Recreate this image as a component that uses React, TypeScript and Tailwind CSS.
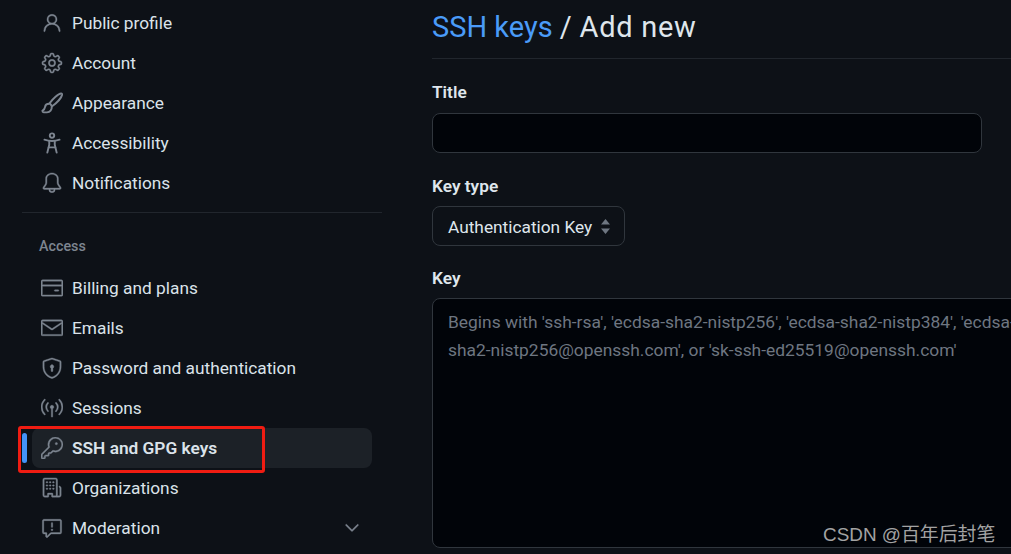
import React from 'react';
import {
  GoPerson, GoGear, GoBell, GoCreditCard, GoMail,
  GoShieldLock, GoBroadcast, GoKey, GoOrganization, GoReport, GoChevronDown,
} from 'react-icons/go';

const BrushIcon: React.FC<{ className?: string }> = ({ className }) => (
  <svg viewBox="0 0 16 16" className={className} fill="none">
    <g stroke="currentColor" strokeWidth="1.4" strokeLinejoin="round" strokeLinecap="round">
      <path d="M6.3 8.1C8.6 5 12.6 1.2 14.6 1.1c.7 0 .8.6.7 1.1-.5 2.1-4.2 6-7.2 8.2z" />
      <path d="M5.9 8.6c-1.7 0-2.8 1-3 2.4-.1 1-.7 1.9-1.9 2.7 0 .6.3 1 1 1.1h2.3c2.3-.1 3.7-1.7 3.5-4.1" />
    </g>
  </svg>
);

const AccessibilityIcon: React.FC<{ className?: string }> = ({ className }) => (
  <svg viewBox="0 0 16 16" className={className} fill="none">
    <g stroke="currentColor" strokeWidth="1.4" strokeLinecap="round" strokeLinejoin="round">
      <circle cx="8" cy="2.6" r="1.6" />
      <path d="M2.5 5.6c3.6 1.2 7.4 1.2 11 0" />
      <path d="M6 6.6v2.6L4.6 15" />
      <path d="M10 6.6v2.6L11.4 15" />
      <path d="M5.6 11.2h4.8" />
    </g>
  </svg>
);

const topNav = [
  { label: 'Public profile', icon: GoPerson },
  { label: 'Account', icon: GoGear },
  { label: 'Appearance', icon: BrushIcon },
  { label: 'Accessibility', icon: AccessibilityIcon },
  { label: 'Notifications', icon: GoBell },
];

const accessNav = [
  { label: 'Billing and plans', icon: GoCreditCard },
  { label: 'Emails', icon: GoMail },
  { label: 'Password and authentication', icon: GoShieldLock },
  { label: 'Sessions', icon: GoBroadcast },
  { label: 'SSH and GPG keys', icon: GoKey, active: true },
  { label: 'Organizations', icon: GoOrganization },
  { label: 'Moderation', icon: GoReport, chevron: true },
];

type Item = { label: string; icon: React.ComponentType<{ className?: string }>; active?: boolean; chevron?: boolean };

const NavItem: React.FC<{ item: Item }> = ({ item }) => {
  const Icon = item.icon;
  return (
    <div className={`relative flex h-10 w-[340px] items-center rounded-lg px-[9px] ${item.active ? 'bg-[#1c2127] font-semibold' : ''}`}>
      {item.active && <span className="absolute left-[-10px] top-[5px] h-[30px] w-[5px] rounded-full bg-[#4493f8]" />}
      <Icon className="h-[22px] w-[22px] shrink-0 stroke-[0.4] text-[#7d8590]" />
      <span className="ml-[9px] text-[#dbe3ea]">{item.label}</span>
      {item.chevron && <GoChevronDown className="ml-auto h-[22px] w-[22px] stroke-[0.4] text-[#7d8590]" />}
    </div>
  );
};

const App: React.FC = () => {
  return (
    <div className="relative flex h-[554px] w-[1011px] overflow-hidden bg-[#0d1117] text-[17.3px] font-['Roboto',sans-serif] leading-5">
      <aside className="ml-[22px] w-[360px] shrink-0 pt-[3px]">
        <div className="ml-[10px]">
          {topNav.map(item => <NavItem key={item.label} item={item} />)}
        </div>
        <div className="mt-[9px] border-t border-[#21262d]" />
        <div className="ml-[17px] mt-[23px] mb-[12px] h-[20px] text-[14.3px] font-medium text-[#7d8590]">Access</div>
        <div className="ml-[10px]">
          {accessNav.map(item => <NavItem key={item.label} item={item} />)}
        </div>
      </aside>

      <main className="ml-[50px] w-[640px] shrink-0">
        <div className="flex h-[59px] items-center border-b border-[#21262d] pb-[5px] text-[29px] text-[#dfe6ec]">
          <span className="text-[#4a9bf8]">SSH keys</span>
          <span className="ml-[7px]">/</span>
          <span className="ml-[8px] tracking-[0.7px]">Add new</span>
        </div>
        <div className="mt-[23px] h-5 font-semibold text-[#dfe6ec]">Title</div>
        <div className="mt-[11px] h-10 w-[550px] rounded-lg border border-[#30363d] bg-[#010409]" />
        <div className="mt-[23px] h-5 font-semibold text-[#dfe6ec]">Key type</div>
        <div className="mt-[10px] flex h-10 w-[193px] items-center rounded-lg border border-[#30363d] pl-[15px] pt-[1px] text-[#dfe6ec]">
          <span>Authentication Key</span>
          <svg viewBox="0 0 9 15" className="ml-[9px] h-[15px] w-[9px]" fill="#6e7681">
            <path d="M4.5 0 9 5.5H0zM4.5 15 0 9.5h9z" />
          </svg>
        </div>
        <div className="mt-[22px] h-5 font-semibold text-[#dfe6ec]">Key</div>
        <div className="mt-[10px] h-[250px] w-full whitespace-nowrap rounded-lg border border-[#30363d] bg-[#010409] pl-[15px] pt-[9px] text-[17.4px] leading-[28px] text-[#6e7681]">
          Begins with 'ssh-rsa', 'ecdsa-sha2-nistp256', 'ecdsa-sha2-nistp384', 'ecdsa-sha2-nistp521', 'ssh-ed25519', 'sk-ecdsa-
          <br />
          sha2-nistp256@openssh.com', or 'sk-ssh-ed25519@openssh.com'
        </div>
      </main>

      <div className="absolute left-[18px] top-[426px] h-[47px] w-[247px] rounded-[3px] border-[3px] border-[#ef1c12]" />
      <div className="absolute left-[823px] top-[523px] text-[18.9px] leading-6 text-[#a3a3a3] font-['Liberation_Sans','Noto_Sans_CJK_SC',sans-serif]">CSDN @百年后封笔</div>
    </div>
  );
};

export default App;
